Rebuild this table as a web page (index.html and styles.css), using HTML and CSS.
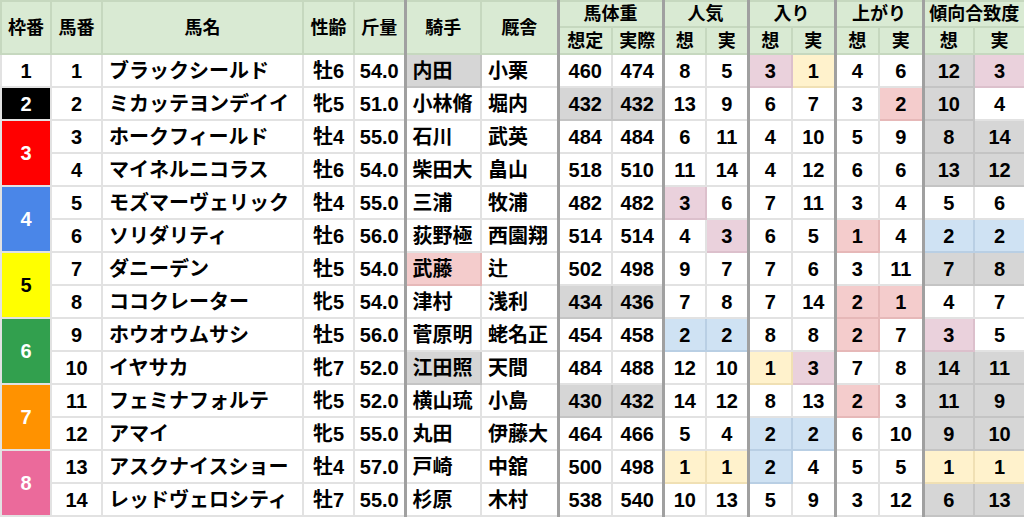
FILE: index.html
```html
<!DOCTYPE html>
<html lang="ja">
<head>
<meta charset="utf-8">
<title>出馬表</title>
<link rel="stylesheet" href="styles.css">
</head>
<body>
<table class="race">
  <colgroup>
    <col class="c50"><col class="c51"><col class="c201"><col class="c51"><col class="c51">
    <col class="c76"><col class="c77"><col class="c54"><col class="c51">
    <col class="c43"><col class="c42"><col class="c44"><col class="c43">
    <col class="c44"><col class="c44"><col class="c51"><col class="c51">
  </colgroup>
  <thead>
    <tr class="h1">
      <th rowspan="2">枠番</th>
      <th rowspan="2">馬番</th>
      <th rowspan="2">馬名</th>
      <th rowspan="2">性齢</th>
      <th rowspan="2">斤量</th>
      <th rowspan="2" class="tl">騎手</th>
      <th rowspan="2">厩舎</th>
      <th colspan="2" class="tl">馬体重</th>
      <th colspan="2" class="tl">人気</th>
      <th colspan="2" class="tl">入り</th>
      <th colspan="2" class="tl">上がり</th>
      <th colspan="2" class="tl">傾向合致度</th>
    </tr>
    <tr class="h2">
      <th class="tl">想定</th><th>実際</th>
      <th class="tl">想</th><th>実</th>
      <th class="tl">想</th><th>実</th>
      <th class="tl">想</th><th>実</th>
      <th class="tl">想</th><th>実</th>
    </tr>
  </thead>
  <tbody>
    <tr>
      <td class="waku w1">1</td><td>1</td><td class="name">ブラックシールド</td><td>牡6</td><td>54.0</td>
      <td class="tl txt g">内田</td><td class="txt">小栗</td>
      <td class="tl">460</td><td>474</td>
      <td class="tl">8</td><td>5</td>
      <td class="tl p">3</td><td class="y">1</td>
      <td class="tl">4</td><td>6</td>
      <td class="tl g">12</td><td class="p">3</td>
    </tr>
    <tr>
      <td class="waku w2">2</td><td>2</td><td class="name">ミカッテヨンデイイ</td><td>牝5</td><td>51.0</td>
      <td class="tl txt">小林脩</td><td class="txt">堀内</td>
      <td class="tl g">432</td><td class="g">432</td>
      <td class="tl">13</td><td>9</td>
      <td class="tl">6</td><td>7</td>
      <td class="tl">3</td><td class="r">2</td>
      <td class="tl g">10</td><td>4</td>
    </tr>
    <tr>
      <td class="waku w3" rowspan="2">3</td><td>3</td><td class="name">ホークフィールド</td><td>牡4</td><td>55.0</td>
      <td class="tl txt">石川</td><td class="txt">武英</td>
      <td class="tl">484</td><td>484</td>
      <td class="tl">6</td><td>11</td>
      <td class="tl">4</td><td>10</td>
      <td class="tl">5</td><td>9</td>
      <td class="tl g">8</td><td class="g">14</td>
    </tr>
    <tr>
      <td>4</td><td class="name">マイネルニコラス</td><td>牡6</td><td>54.0</td>
      <td class="tl txt">柴田大</td><td class="txt">畠山</td>
      <td class="tl">518</td><td>510</td>
      <td class="tl">11</td><td>14</td>
      <td class="tl">4</td><td>12</td>
      <td class="tl">6</td><td>6</td>
      <td class="tl g">13</td><td class="g">12</td>
    </tr>
    <tr>
      <td class="waku w4" rowspan="2">4</td><td>5</td><td class="name">モズマーヴェリック</td><td>牡4</td><td>55.0</td>
      <td class="tl txt">三浦</td><td class="txt">牧浦</td>
      <td class="tl">482</td><td>482</td>
      <td class="tl p">3</td><td>6</td>
      <td class="tl">7</td><td>11</td>
      <td class="tl">3</td><td>4</td>
      <td class="tl">5</td><td>6</td>
    </tr>
    <tr>
      <td>6</td><td class="name">ソリダリティ</td><td>牡6</td><td>56.0</td>
      <td class="tl txt">荻野極</td><td class="txt">西園翔</td>
      <td class="tl">514</td><td>514</td>
      <td class="tl">4</td><td class="p">3</td>
      <td class="tl">6</td><td>5</td>
      <td class="tl r">1</td><td>4</td>
      <td class="tl b">2</td><td class="b">2</td>
    </tr>
    <tr>
      <td class="waku w5" rowspan="2">5</td><td>7</td><td class="name">ダニーデン</td><td>牡5</td><td>54.0</td>
      <td class="tl txt r">武藤</td><td class="txt">辻</td>
      <td class="tl">502</td><td>498</td>
      <td class="tl">9</td><td>7</td>
      <td class="tl">7</td><td>6</td>
      <td class="tl">3</td><td>11</td>
      <td class="tl g">7</td><td class="g">8</td>
    </tr>
    <tr>
      <td>8</td><td class="name">ココクレーター</td><td>牝5</td><td>54.0</td>
      <td class="tl txt">津村</td><td class="txt">浅利</td>
      <td class="tl g">434</td><td class="g">436</td>
      <td class="tl">7</td><td>8</td>
      <td class="tl">7</td><td>14</td>
      <td class="tl r">2</td><td class="r">1</td>
      <td class="tl">4</td><td>7</td>
    </tr>
    <tr>
      <td class="waku w6" rowspan="2">6</td><td>9</td><td class="name">ホウオウムサシ</td><td>牡5</td><td>56.0</td>
      <td class="tl txt">菅原明</td><td class="txt">蛯名正</td>
      <td class="tl">454</td><td>458</td>
      <td class="tl b">2</td><td class="b">2</td>
      <td class="tl">8</td><td>8</td>
      <td class="tl r">2</td><td>7</td>
      <td class="tl p">3</td><td>5</td>
    </tr>
    <tr>
      <td>10</td><td class="name">イヤサカ</td><td>牝7</td><td>52.0</td>
      <td class="tl txt g">江田照</td><td class="txt">天間</td>
      <td class="tl">484</td><td>488</td>
      <td class="tl">12</td><td>10</td>
      <td class="tl y">1</td><td class="p">3</td>
      <td class="tl">7</td><td>8</td>
      <td class="tl g">14</td><td class="g">11</td>
    </tr>
    <tr>
      <td class="waku w7" rowspan="2">7</td><td>11</td><td class="name">フェミナフォルテ</td><td>牝5</td><td>52.0</td>
      <td class="tl txt">横山琉</td><td class="txt">小島</td>
      <td class="tl g">430</td><td class="g">432</td>
      <td class="tl">14</td><td>12</td>
      <td class="tl">8</td><td>13</td>
      <td class="tl r">2</td><td>3</td>
      <td class="tl g">11</td><td class="g">9</td>
    </tr>
    <tr>
      <td>12</td><td class="name">アマイ</td><td>牝5</td><td>55.0</td>
      <td class="tl txt">丸田</td><td class="txt">伊藤大</td>
      <td class="tl">464</td><td>466</td>
      <td class="tl">5</td><td>4</td>
      <td class="tl b">2</td><td class="b">2</td>
      <td class="tl">6</td><td>10</td>
      <td class="tl g">9</td><td class="g">10</td>
    </tr>
    <tr>
      <td class="waku w8" rowspan="2">8</td><td>13</td><td class="name">アスクナイスショー</td><td>牡4</td><td>57.0</td>
      <td class="tl txt">戸崎</td><td class="txt">中舘</td>
      <td class="tl">500</td><td>498</td>
      <td class="tl y">1</td><td class="y">1</td>
      <td class="tl b">2</td><td>4</td>
      <td class="tl">5</td><td>5</td>
      <td class="tl y">1</td><td class="y">1</td>
    </tr>
    <tr>
      <td>14</td><td class="name">レッドヴェロシティ</td><td>牡7</td><td>55.0</td>
      <td class="tl txt">杉原</td><td class="txt">木村</td>
      <td class="tl">538</td><td>540</td>
      <td class="tl">10</td><td>13</td>
      <td class="tl">5</td><td>9</td>
      <td class="tl">3</td><td>12</td>
      <td class="tl g">6</td><td class="g">13</td>
    </tr>
  </tbody>
</table>
</body>
</html>
```

FILE: styles.css
```css
html, body {
  margin: 0;
  padding: 0;
  background: #ffffff;
}

.race {
  border-collapse: collapse;
  table-layout: fixed;
  width: 1024px;
  font-family: "Liberation Sans", "Noto Sans CJK JP", sans-serif;
  font-weight: bold;
  color: #000;
}

.c50 { width: 50px; }
.c51 { width: 51px; }
.c201 { width: 201px; }
.c76 { width: 76px; }
.c77 { width: 77px; }
.c54 { width: 54px; }
.c43 { width: 43px; }
.c42 { width: 42px; }
.c44 { width: 44px; }

.race th,
.race td {
  padding: 0;
  text-align: center;
  vertical-align: middle;
  white-space: nowrap;
  overflow: hidden;
  line-height: 1;
}

.race th {
  background: #d9ead3;
  border: 2px solid #c6d8bf;
  font-size: 18px;
  font-weight: bold;
}

.race td {
  border: 2px solid #e2e2e2;
  font-size: 20px;
}

.h1 { height: 26px; }
.h2 { height: 27px; }
.race tbody tr { height: 33px; }

.race .tl { border-left: 3px solid #a0a0a0; }

.race td.name,
.race td.txt {
  text-align: left;
  padding-left: 6px;
}

.race td.g { background: #d6d6d6; border-color: #c4c4c4; }
.race td.p { background: #ead1dc; border-color: #dcc0cc; }
.race td.y { background: #fff2cc; border-color: #f0e0b4; }
.race td.r { background: #f4cccc; border-color: #e6b8b8; }
.race td.b { background: #cfe2f3; border-color: #b9cfe4; }
.race td.tl.g,
.race td.tl.p,
.race td.tl.y,
.race td.tl.r,
.race td.tl.b { border-left: 3px solid #a0a0a0; }

.race td.waku { color: #fff; }
.race td.w1 { background: #ffffff; color: #000; }
.race td.w2 { background: #000000; }
.race td.w3 { background: #ff0000; }
.race td.w4 { background: #4a86e8; }
.race td.w5 { background: #ffff00; color: #000; }
.race td.w6 { background: #32a04e; }
.race td.w7 { background: #ff9200; }
.race td.w8 { background: #eb6a9b; }
```
